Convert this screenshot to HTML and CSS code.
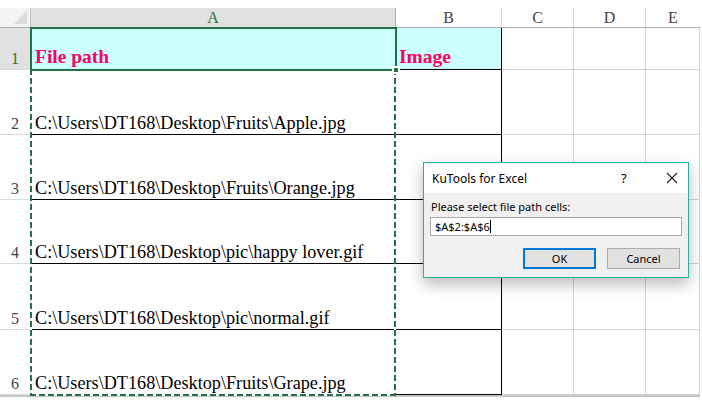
FILE: index.html
```html
<!DOCTYPE html>
<html lang="en">
<head>
    <meta charset="UTF-8">
    <title>Sheet - KuTools</title>
    <link rel="stylesheet" href="styles.css">
</head>
<body>
    <div class="sheet">
        <div class="grid">
            <div class="corner"><span class="tri"></span></div>
            <div class="colhead sel">A</div>
            <div class="colhead">B</div>
            <div class="colhead">C</div>
            <div class="colhead">D</div>
            <div class="colhead last">E</div>

            <div class="rowhead sel">1</div>
            <div class="cell data head-cell title">File path</div>
            <div class="cell data head-cell title b">Image</div>
            <div class="cell"></div>
            <div class="cell"></div>
            <div class="cell"></div>

            <div class="rowhead">2</div>
            <div class="cell data">C:\Users\DT168\Desktop\Fruits\Apple.jpg</div>
            <div class="cell data b"></div>
            <div class="cell"></div>
            <div class="cell"></div>
            <div class="cell"></div>

            <div class="rowhead">3</div>
            <div class="cell data">C:\Users\DT168\Desktop\Fruits\Orange.jpg</div>
            <div class="cell data b"></div>
            <div class="cell"></div>
            <div class="cell"></div>
            <div class="cell"></div>

            <div class="rowhead">4</div>
            <div class="cell data">C:\Users\DT168\Desktop\pic\happy lover.gif</div>
            <div class="cell data b"></div>
            <div class="cell"></div>
            <div class="cell"></div>
            <div class="cell"></div>

            <div class="rowhead">5</div>
            <div class="cell data">C:\Users\DT168\Desktop\pic\normal.gif</div>
            <div class="cell data b"></div>
            <div class="cell"></div>
            <div class="cell"></div>
            <div class="cell"></div>

            <div class="rowhead">6</div>
            <div class="cell data">C:\Users\DT168\Desktop\Fruits\Grape.jpg</div>
            <div class="cell data b"></div>
            <div class="cell"></div>
            <div class="cell"></div>
            <div class="cell"></div>
        </div>

        <div class="copy-range"></div>
        <div class="active-cell"><span class="handle"></span></div>

        <div class="dialog">
            <div class="dlg-title">
                <span class="dlg-name">KuTools for Excel</span>
                <span class="dlg-help">?</span>
                <span class="dlg-close">
                    <svg width="12" height="12" viewBox="0 0 12 12"><path d="M1 1 L11 11 M11 1 L1 11" stroke="#222" stroke-width="1.1" fill="none"/></svg>
                </span>
            </div>
            <div class="dlg-body">
                <div class="dlg-label">Please select file path cells:</div>
                <div class="dlg-input">$A$2:$A$6<span class="caret"></span></div>
                <div class="dlg-buttons">
                    <button class="btn default">OK</button>
                    <button class="btn">Cancel</button>
                </div>
            </div>
        </div>
    </div>
</body>
</html>
```

FILE: styles.css
```css
body {
    margin: 0;
    background: #fff;
    font-family: "Liberation Serif", "Times New Roman", serif;
}
.sheet {
    position: relative;
    width: 702px;
    height: 403px;
    padding-top: 8px;
    box-sizing: border-box;
    overflow: hidden;
}
.grid {
    display: grid;
    grid-template-columns: 31px 365px 106px 72px 72px 54px;
    grid-template-rows: 20px 42px 65px 65px 64px 66px 65px;
    border-bottom: 2px solid #c6c6c6;
    width: 700px;
}
.corner {
    background: #f3f3f3;
    border-right: 1px solid #c6c6c6;
    border-bottom: 1px solid #ababab;
    position: relative;
}
.tri {
    position: absolute;
    right: 3px;
    bottom: 3px;
    width: 0;
    height: 0;
    border-left: 13px solid transparent;
    border-bottom: 13px solid #dcdcdc;
}
.colhead {
    font-size: 16px;
    color: #444;
    text-align: center;
    line-height: 20px;
    border-right: 1px solid #dadada;
    border-bottom: 1px solid #ababab;
    background: #fff;
}
.colhead.sel {
    background: #e1e1e1;
    color: #217346;
    border-right-color: #ababab;
}
.colhead.last {
    border-right: none;
}
.rowhead {
    font-size: 16px;
    color: #444;
    text-align: center;
    display: flex;
    align-items: flex-end;
    justify-content: center;
    padding-bottom: 1px;
    border-bottom: 1px solid #dadada;
    border-right: 1px solid #ababab;
}
.rowhead.sel {
    background: #e1e1e1;
    color: #217346;
}
.cell {
    border-right: 1px solid #d4d4d4;
    border-bottom: 1px solid #d4d4d4;
}
.cell.data {
    border-bottom: 1px solid #000;
    font-size: 18.2px;
    color: #000;
    display: flex;
    align-items: flex-end;
    padding: 0 0 0 4px;
    white-space: nowrap;
}
.cell.b {
    border-right: 1px solid #000;
}
.cell.head-cell {
    background: #ccffff;
}
.cell.title {
    font-weight: bold;
    color: #ff0066;
    font-size: 19.5px;
    padding-bottom: 1px;
}
.cell.title.b {
    padding-left: 3px;
}
.active-cell {
    position: absolute;
    left: 30px;
    top: 27px;
    width: 363px;
    height: 40px;
    border: 2px solid #217346;
}
.handle {
    position: absolute;
    right: -5px;
    bottom: -5px;
    width: 4px;
    height: 4px;
    background: #217346;
    border: 2px solid #fff;
}
.copy-range {
    position: absolute;
    left: 30px;
    top: 69px;
    width: 366px;
    height: 327px;
    background:
        repeating-linear-gradient(90deg, #217346 0 6px, #fff 6px 9px) left top / 100% 2px no-repeat,
        repeating-linear-gradient(90deg, #217346 0 6px, #fff 6px 9px) left bottom / 100% 2px no-repeat,
        repeating-linear-gradient(180deg, #217346 0 6px, #fff 6px 9px) left top / 2px 100% no-repeat,
        repeating-linear-gradient(180deg, #217346 0 6px, #fff 6px 9px) right top / 2px 100% no-repeat;
}
.dialog {
    position: absolute;
    left: 423px;
    top: 162px;
    width: 266px;
    height: 116px;
    box-sizing: border-box;
    border: 1px solid #1fb49c;
    background: #f0f0f0;
    font-family: "Noto Sans", "Open Sans", sans-serif;
    font-size: 11px;
    color: #000;
    box-shadow: 0 6px 14px rgba(0, 0, 0, 0.28);
}
.dlg-title {
    background: #fff;
    height: 30px;
    display: flex;
    align-items: center;
    padding-left: 8px;
}
.dlg-name {
    flex: 1;
    font-size: 12px;
}
.dlg-help {
    width: 20px;
    font-size: 13px;
    margin-right: 25px;
}
.dlg-close {
    width: 22px;
    display: flex;
}
.dlg-body {
    padding: 6px 6px 0 6px;
}
.dlg-label {
    height: 15px;
    line-height: 15px;
    padding-left: 1px;
}
.dlg-input {
    margin-top: 3px;
    height: 19px;
    box-sizing: border-box;
    border: 1px solid #a9a9a9;
    background: #fff;
    line-height: 17px;
    padding-left: 4px;
    font-size: 11px;
}
.caret {
    display: inline-block;
    width: 1px;
    height: 13px;
    background: #000;
    vertical-align: -2px;
}
.dlg-buttons {
    display: flex;
    justify-content: flex-end;
    gap: 11px;
    margin-top: 12px;
    padding-right: 2px;
}
.btn {
    width: 73px;
    height: 21px;
    box-sizing: border-box;
    background: #e1e1e1;
    border: 1px solid #adadad;
    font-family: "Noto Sans", "Open Sans", sans-serif;
    font-size: 11px;
    padding: 0;
}
.btn.default {
    border: 2px solid #0078d7;
}
```
